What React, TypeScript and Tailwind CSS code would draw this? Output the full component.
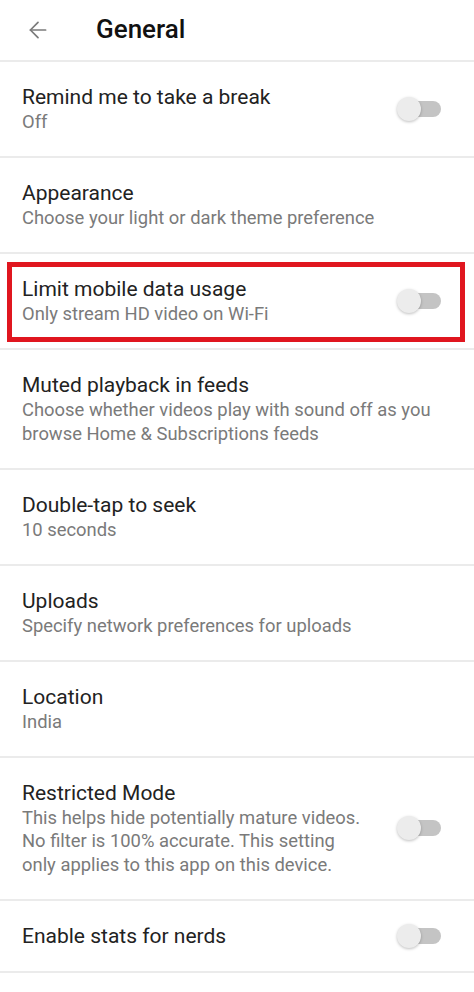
import { ArrowLeft } from 'lucide-react';

type Setting = {
  title: string;
  lines: string[];
  toggle?: boolean;
  highlight?: boolean;
};

const settings: Setting[] = [
  { title: 'Remind me to take a break', lines: ['Off'], toggle: true },
  { title: 'Appearance', lines: ['Choose your light or dark theme preference'] },
  { title: 'Limit mobile data usage', lines: ['Only stream HD video on Wi-Fi'], toggle: true, highlight: true },
  {
    title: 'Muted playback in feeds',
    lines: ['Choose whether videos play with sound off as you', 'browse Home & Subscriptions feeds'],
  },
  { title: 'Double-tap to seek', lines: ['10 seconds'] },
  { title: 'Uploads', lines: ['Specify network preferences for uploads'] },
  { title: 'Location', lines: ['India'] },
  {
    title: 'Restricted Mode',
    lines: [
      'This helps hide potentially mature videos.',
      'No filter is 100% accurate. This setting',
      'only applies to this app on this device.',
    ],
    toggle: true,
  },
  { title: 'Enable stats for nerds', lines: [], toggle: true },
];

const Toggle = () => (
  <div className="relative w-[46px] h-[26px] flex items-center shrink-0">
    <div className="absolute left-[12px] w-[32px] h-[16px] rounded-full bg-[#c4c4c4]" />
    <div className="absolute left-0 w-[24px] h-[24px] rounded-full bg-[#ececec] shadow-[0_1px_3px_rgba(0,0,0,0.25)]" />
  </div>
);

const Row = ({ s }: { s: Setting }) => (
  <div className="relative flex items-center border-b-2 border-[#ebebeb] pl-[22px] pr-[31px] pt-[22px] pb-[22.5px]">
    <div className="flex-1 min-w-0">
      <div className="text-[21px] leading-[26px] text-[#222]">{s.title}</div>
      {s.lines.map((l) => (
        <div key={l} className="text-[18.4px] leading-[23.5px] text-[#7a7a7a] whitespace-nowrap">
          {l}
        </div>
      ))}
    </div>
    {s.toggle && <Toggle />}
    {s.highlight && (
      <div className="absolute left-[7px] right-[9px] top-[8px] bottom-[6px] border-[5px] border-[#e0161f] pointer-events-none" />
    )}
  </div>
);

export default function App() {
  return (
    <div className="w-[474px] min-h-[992px] bg-white font-['Roboto',sans-serif]">
      <div className="h-[62px] flex items-center border-b-2 border-[#ebebeb]">
        <div className="w-[96px] flex items-center pl-[25px]">
          <ArrowLeft size={26} strokeWidth={1.6} className="text-[#7b7b7b]" />
        </div>
        <div className="text-[26px] font-medium text-[#111] -mt-[2px]">General</div>
      </div>
      {settings.map((s) => (
        <Row key={s.title} s={s} />
      ))}
    </div>
  );
}
